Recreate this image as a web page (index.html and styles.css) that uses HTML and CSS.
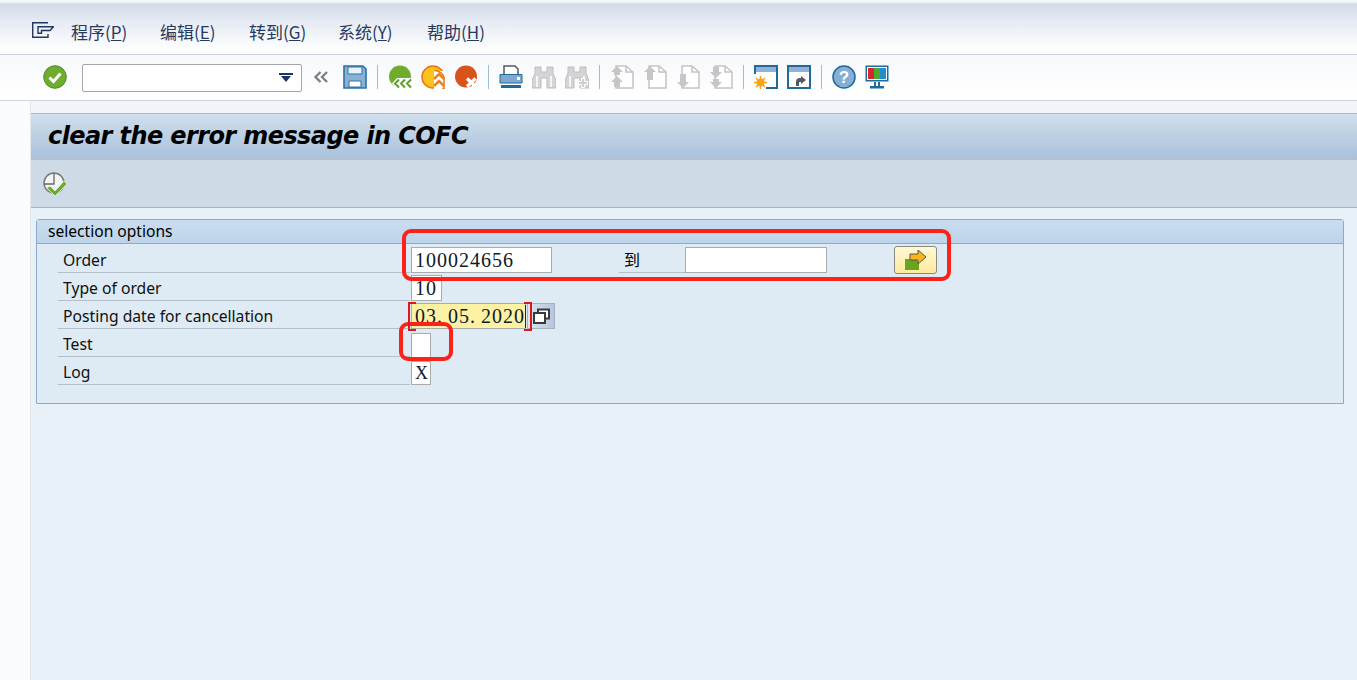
FILE: index.html
```html
<!DOCTYPE html>
<html lang="zh-CN">

<head>
    <meta charset="UTF-8">
    <title>clear the error message in COFC</title>
    <link rel="stylesheet" href="styles.css">
</head>

<body>
    <!-- Menu bar -->
    <div class="menubar">
        <svg class="menu-icon" width="22" height="16" viewBox="0 0 22 16" fill="none" stroke="#22365f" stroke-width="1.4">
            <path d="M16 .7H.7v14.6H16V12"/>
            <path d="M6 4.7h15.5L18 8.5H9.5v2.8H6z"/>
        </svg>
        <span class="menu-item">程序(<u>P</u>)</span>
        <span class="menu-item">编辑(<u>E</u>)</span>
        <span class="menu-item">转到(<u>G</u>)</span>
        <span class="menu-item">系统(<u>Y</u>)</span>
        <span class="menu-item">帮助(<u>H</u>)</span>
    </div>

    <!-- System toolbar -->
    <div class="toolbar">
        <svg class="icon" viewBox="0 0 24 24">
            <circle cx="12" cy="12" r="11.3" fill="#6fae2c" stroke="#4d8a32"/>
            <path d="M6.5 12.5l4 4 7-8" fill="none" stroke="#fff" stroke-width="3"/>
        </svg>
        <div class="combo">
            <svg width="14" height="9" viewBox="0 0 14 9"><path d="M0 0h14v2H0zM2 3h10L7 9z" fill="#1d3560"/></svg>
        </div>
        <svg class="icon-back" width="20" height="24" viewBox="0 0 20 24" fill="none" stroke="#7c8087" stroke-width="2.4">
            <path d="M9.5 7l-5 5 5 5M16 7l-5 5 5 5"/>
        </svg>
        <svg class="icon icon-save" viewBox="0 0 24 24">
            <path d="M1 1h19l3 3v19H1z" fill="#8ab0d6" stroke="#2a74a4" stroke-width="1.600"/>
            <path d="M5 2h14v7H5z" fill="#e9f1f9" stroke="#2a74a4"/>
            <path d="M6 16h12v6H6z" fill="#fff" stroke="#2a74a4"/>
        </svg>
        <span class="tb-sep"></span>
        <svg class="icon" viewBox="0 0 24 24">
            <circle cx="12" cy="11.500" r="11" fill="#6fae2c"/>
            <path d="M9 13l-5 5.500 5 5.500h15V13z" fill="#fff"/>
            <path d="M11 14.500l-4 4 4 4M17 14.500l-4 4 4 4M23 14.500l-4 4 4 4" fill="none" stroke="#5d9b2c" stroke-width="2"/>
        </svg>
        <svg class="icon" viewBox="0 0 24 24">
            <circle cx="12" cy="12" r="11" fill="#fcc31a" stroke="#e8741c" stroke-width="1.500"/>
            <path d="M13 6h11v18H13z" fill="#fff"/>
            <path d="M13.500 5.500a11 11 0 0 1 9.500 6.500v12h-2" fill="none" stroke="#e8741c" stroke-width="1.500"/>
            <path d="M13 14l5-5 5 5M13 21l5-5 5 5" fill="none" stroke="#ee8420" stroke-width="2.500"/>
        </svg>
        <svg class="icon" viewBox="0 0 24 24">
            <circle cx="12" cy="11.500" r="11" fill="#d8531c"/>
            <path d="M13 13.500l8.500 8M21.500 13.500L13 21.500" stroke="#fff" stroke-width="3.400"/>
        </svg>
        <span class="tb-sep"></span>
        <svg class="icon" viewBox="0 0 24 24">
            <path d="M5 9V1h11l3 3v5" fill="#fff" stroke="#55595e" stroke-width="1.500"/>
            <path d="M1 9.500h22V18H1z" fill="#80a8d0" stroke="#1f6a9c"/>
            <path d="M2 20h20v3H2z" fill="#1f6a9c"/>
            <path d="M18 12h3v3h-3z" fill="#fff"/>
        </svg>
        <svg class="icon" viewBox="0 0 24 24">
            <use href="#binoculars"/>
        </svg>
        <svg class="icon" viewBox="0 0 24 24">
            <use href="#binoculars"/>
            <path d="M16.500 13.500h3v3h3v3h-3v3h-3v-3h-3v-3h3z" fill="#cfcfcf" stroke="#fff"/>
        </svg>
        <span class="tb-sep"></span>
        <svg class="icon" viewBox="0 0 24 24">
            <use href="#page"/>
            <path d="M7 1l6 6h-3v3H4V7H1zM7 11l6 6h-3v5H4v-5H1z" fill="#c6c6c6"/>
        </svg>
        <svg class="icon" viewBox="0 0 24 24">
            <use href="#page"/>
            <path d="M7 1l6 6h-3v8H4V7H1z" fill="#c6c6c6"/>
        </svg>
        <svg class="icon" viewBox="0 0 24 24">
            <use href="#page"/>
            <path d="M7 23l6-6h-3V9H4v8H1z" fill="#c6c6c6"/>
        </svg>
        <svg class="icon" viewBox="0 0 24 24">
            <use href="#page"/>
            <path d="M7 13l6-6h-3V2H4v5H1zM7 23l6-6h-3v-3H4v3H1z" fill="#c6c6c6"/>
        </svg>
        <span class="tb-sep"></span>
        <svg class="icon" viewBox="0 0 24 24">
            <path d="M1 9V1h22v22H12" fill="#fff" stroke="#1f6a9c" stroke-width="2"/>
            <path d="M2 2h20v5H2z" fill="#8fb2d6"/>
            <circle cx="6.500" cy="17.500" r="4" fill="#f7a51c"/>
            <path d="M6.500 11v13M0 17.500h13M2 13l9 9M11 13l-9 9" stroke="#f7a51c" stroke-width="1.500"/>
        </svg>
        <svg class="icon" viewBox="0 0 24 24">
            <path d="M1 1h22v22H1z" fill="#fff" stroke="#1f6a9c" stroke-width="2"/>
            <path d="M2 2h20v5H2z" fill="#8fb2d6"/>
            <path d="M9 21v-4q0-4 4-4h1v-2l5 4-5 4v-2h-1q-1 0-1 1v3z" fill="#55585d"/>
        </svg>
        <span class="tb-sep"></span>
        <svg class="icon" viewBox="0 0 24 24">
            <circle cx="12" cy="12" r="11" fill="#86afd6" stroke="#1f6a9c" stroke-width="1.500"/>
            <text class="help-mark" x="12" y="18" text-anchor="middle">?</text>
        </svg>
        <svg class="icon" viewBox="0 0 24 24">
            <path d="M.5.500h23v16H.5z" fill="#1f6a9c"/>
            <path d="M2 2h20v13H2z" fill="#fff"/>
            <path d="M3 3h6v11H3z" fill="#d6262c"/>
            <path d="M9 3h6v11H9z" fill="#4ea72e"/>
            <path d="M15 3h6v11h-6z" fill="#1f8ecb"/>
            <path d="M9 17h2v4H9zM13 17h2v4h-2zM5 21h14v2.500H5z" fill="#1f6a9c"/>
        </svg>
    </div>

    <div class="main">
        <div class="side"></div>
        <div class="work">
            <h1 class="title">clear the error message in COFC</h1>
            <div class="app-toolbar">
                <svg class="icon" viewBox="0 0 24 24">
                    <circle cx="11" cy="11" r="10" fill="#f2f4f6" stroke="#77797c" stroke-width="1.500"/>
                    <path d="M11 1v11H1" fill="none" stroke="#66686b" stroke-width="1.300"/>
                    <path d="M7 14l5 5 9-10 3 3-12 12-8-8z" fill="#6aaa2e" stroke="#e9f1e0" stroke-width=".8"/>
                </svg>
            </div>
            <div class="panel-wrap">
                <div class="panel">
                    <div class="panel-head">selection options</div>
                    <div class="panel-body">
                        <div class="row">
                            <span class="label">Order</span>
                            <span class="field field-order">100024656</span>
                            <span class="to-label">到</span>
                            <span class="field field-order2"></span>
                            <button class="select-btn">
                                <svg width="22" height="20" viewBox="0 0 22 20">
                                    <path d="M0 9h14v11H0z" fill="#69a51f"/>
                                    <path d="M12 8h3v3h-3z" fill="#fff"/>
                                    <path d="M5 4h8V0l8 7-8 7v-4H5z" fill="#fbb41a" stroke="#555" stroke-width="1"/>
                                </svg>
                            </button>
                        </div>
                        <div class="row">
                            <span class="label">Type of order</span>
                            <span class="field field-type">10</span>
                        </div>
                        <div class="row">
                            <span class="label">Posting date for cancellation</span>
                            <span class="field field-date">03<span class="date-dot">.</span>05<span class="date-dot">.</span>2020</span>
                            <span class="f4-btn">
                                <svg width="17" height="16" viewBox="0 0 17 16" fill="#fff" stroke="#3a3a3a" stroke-width="2">
                                    <path d="M5 1.500h11v9H5z"/>
                                    <path d="M1 5h11v10H1z"/>
                                </svg>
                            </span>
                        </div>
                        <div class="row">
                            <span class="label">Test</span>
                            <span class="field field-check field-test"></span>
                        </div>
                        <div class="row">
                            <span class="label">Log</span>
                            <span class="field field-check field-log">X</span>
                        </div>
                    </div>
                </div>
            </div>
        </div>
    </div>

    <!-- Hand-drawn annotations and required-field marks -->
    <div class="mark mark-order"></div>
    <div class="mark mark-test"></div>
    <div class="req req-left"></div>
    <div class="req req-right"></div>
    <div class="caret"></div>

    <svg class="defs" width="0" height="0">
        <symbol id="binoculars" viewBox="0 0 24 24">
            <path d="M3 2h6v5h6V2h6v6l3 8v7h-9V13h-6v10H0v-7l3-8z" fill="#d4d4d4" stroke="#bdbdbd"/>
            <path d="M4 11h2v11H4zM18 11h2v11h-2z" fill="#f4f4f4"/>
        </symbol>
        <symbol id="page" viewBox="0 0 24 24">
            <path d="M6 1h10l7 6v16H6z" fill="#fff" stroke="#c4c4c4" stroke-width="1.500"/>
            <path d="M16 1v6h7" fill="none" stroke="#c4c4c4" stroke-width="1.500"/>
        </symbol>
    </svg>
</body>

</html>
```

FILE: styles.css
```css
* {
    margin: 0;
    padding: 0;
    box-sizing: border-box;
}

html,
body {
    height: 100%;
    overflow: hidden;
}

body {
    font-family: "Noto Sans", "Noto Sans CJK SC", sans-serif;
    background: #f9fbfd;
    color: #000;
    display: flex;
    flex-direction: column;
}

/* Menu bar */
.menubar {
    height: 55px;
    flex: none;
    display: flex;
    align-items: center;
    padding: 8px 0 0 32px;
    background: linear-gradient(#f3f5f9 0, #f3f5f9 2px, #d4dce9 4px, #e6ebf3 22px, #fcfdfe 48px);
    border-bottom: 1px solid #ccd3dd;
}

.menu-icon {
    margin: -2px 17px 0 0;
}

.menu-item {
    font-family: "Noto Sans CJK SC", sans-serif;
    font-size: 17px;
    color: #27395f;
    width: 58px;
    margin-right: 31px;
    white-space: nowrap;
}

/* System toolbar */
.toolbar {
    height: 46px;
    flex: none;
    display: flex;
    align-items: center;
    gap: 9px;
    padding: 0 0 2px 43px;
    background: linear-gradient(#f6f8fb, #fff);
    border-bottom: 1px solid #ccd3dd;
}

.icon {
    width: 24px;
    height: 24px;
    flex: none;
}

.icon-save {
    margin-left: 3px;
}

.help-mark {
    font-family: "Liberation Sans", sans-serif;
    font-size: 17px;
    font-weight: bold;
    fill: #fff;
}

.combo {
    width: 220px;
    height: 28px;
    margin: 2px 0 0 6px;
    display: flex;
    align-items: center;
    justify-content: flex-end;
    padding-right: 8px;
    background: #fff;
    border: 1px solid #a3a7ab;
    border-radius: 2px;
}

.tb-sep {
    width: 1px;
    height: 24px;
    margin: 0 1px;
    flex: none;
    background: #9dbcd9;
}

/* Work area */
.main {
    flex: 1;
    display: flex;
    min-height: 0;
}

.side {
    width: 30px;
    flex: none;
}

.work {
    flex: 1;
    padding-top: 12px;
    background: linear-gradient(#f1f4f9 12px, #e8f0f8 12px);
    border-left: 1px solid #e3e8ee;
}

.title {
    height: 47px;
    padding-left: 17px;
    font-family: "DejaVu Sans", sans-serif;
    font-size: 24px;
    font-weight: bold;
    font-style: italic;
    letter-spacing: -0.6px;
    line-height: 45px;
    white-space: nowrap;
    background: linear-gradient(#cfdfec, #a9c2da);
    border-top: 1px solid #a9b9cc;
    border-bottom: 2px solid #b3c2d2;
}

.app-toolbar {
    height: 48px;
    display: flex;
    align-items: center;
    padding-left: 12px;
    background: #cedbe6;
    border-bottom: 1px solid #a3b4c6;
}

.panel-wrap {
    padding: 11px 13px 0 5px;
}

.panel {
    height: 185px;
    background: #deeaf4;
    border: 1px solid #8fa9c8;
    border-radius: 3px 3px 0 0;
}

.panel-head {
    height: 24px;
    padding-left: 11px;
    font-size: 15.600px;
    line-height: 22px;
    background: linear-gradient(#c9ddef, #bcd4ea);
    border-bottom: 1px solid #8fa9c8;
}

.panel-body {
    padding: 1px 0 0 21px;
}

/* Selection rows */
.row {
    height: 28px;
    display: flex;
    align-items: flex-end;
}

.label {
    width: 352px;
    height: 100%;
    padding-left: 5px;
    font-size: 15.700px;
    line-height: 31px;
    color: #111;
    border-bottom: 1px solid #b4bfca;
}

.field {
    height: 26px;
    margin-left: 1px;
    padding-left: 3px;
    flex: none;
    font-family: "Liberation Serif", serif;
    font-size: 20px;
    line-height: 25px;
    letter-spacing: 1px;
    color: #0c1a2c;
    white-space: nowrap;
    background: #fff;
    border: 1px solid #ababab;
}

.field-order {
    width: 141px;
}

.field-order2 {
    width: 142px;
    margin-left: 0;
}

.field-type {
    width: 31px;
}

.field-date {
    width: 115px;
    background: #fdf1a4;
}

.date-dot {
    letter-spacing: 6px;
}

.field-check {
    width: 20px;
}

.field-test {
    height: 25px;
    margin-bottom: -1px;
}

.field-log {
    height: 24px;
    font-size: 18px;
    line-height: 23px;
}

.to-label {
    width: 133px;
    height: 100%;
    padding-left: 72px;
    font-family: "Noto Sans CJK SC", sans-serif;
    font-size: 16px;
    line-height: 28px;
    background: linear-gradient(#b4bfca, #b4bfca) right bottom / 66px 1px no-repeat;
}

.select-btn {
    width: 43px;
    height: 28px;
    margin: 0 0 -1px 67px;
    display: flex;
    align-items: center;
    justify-content: center;
    background: linear-gradient(#fef8d4, #fdeb9c);
    border: 1px solid #8a8a80;
    border-radius: 3px;
}

.f4-btn {
    width: 28px;
    height: 26px;
    margin-left: 1px;
    display: flex;
    align-items: center;
    justify-content: center;
    background: linear-gradient(90deg, #dbe5f0, #b5c6dc);
    border: 1px solid #a6b1bf;
}

/* Overlays */
.mark {
    position: absolute;
    border: 4px solid #fb2319;
    border-radius: 9px;
}

.mark-order {
    left: 402px;
    top: 229px;
    width: 549px;
    height: 52px;
}

.mark-test {
    left: 399px;
    top: 322px;
    width: 54px;
    height: 39px;
}

.req {
    position: absolute;
    top: 302px;
    width: 8px;
    height: 29px;
    border: 2px solid #d81a1a;
}

.req-left {
    left: 408px;
    border-right: 0;
}

.req-right {
    left: 524px;
    border-left: 0;
}

.caret {
    position: absolute;
    left: 525px;
    top: 305px;
    width: 1px;
    height: 23px;
    background: #12264f;
}

.defs {
    position: absolute;
}
```
